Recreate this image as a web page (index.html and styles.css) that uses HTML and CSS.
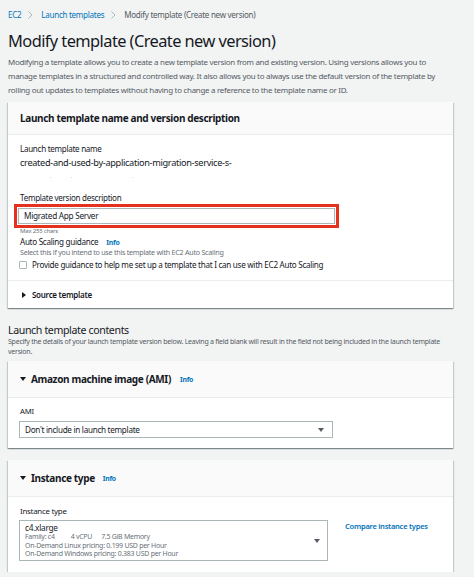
FILE: index.html
```html
<!DOCTYPE html>
<html lang="en">
<head>
<meta charset="utf-8">
<title>Modify template (Create new version)</title>
<link rel="stylesheet" href="styles.css">
</head>
<body>
<div class="page">
  <nav class="crumbs">
    <a class="crumb-link">EC2</a>
    <svg class="chev" width="5" height="8" viewBox="0 0 5 8"><polyline points="0.5,0.5 4,4 0.5,7.5" fill="none" stroke="#aab7b8" stroke-width="1"/></svg>
    <a class="crumb-link">Launch templates</a>
    <svg class="chev" width="5" height="8" viewBox="0 0 5 8"><polyline points="0.5,0.5 4,4 0.5,7.5" fill="none" stroke="#aab7b8" stroke-width="1"/></svg>
    <span class="crumb-current">Modify template (Create new version)</span>
  </nav>

  <h1 class="title">Modify template (Create new version)</h1>
  <p class="intro">Modifying a template allows you to create a new template version from and existing version. Using versions allows you to<br>manage templates in a structured and controlled way. It also allows you to always use the default version of the template by<br>rolling out updates to templates without having to change a reference to the template name or ID.</p>

  <section class="card">
    <div class="card-head card-head-sm">
      <h2 class="card-title">Launch template name and version description</h2>
    </div>
    <div class="card-body body-1">
      <div class="label">Launch template name</div>
      <div class="value">created-and-used-by-application-migration-service-s-</div>
      <div class="blurred"><span class="dot d1"></span><span class="dot d2"></span><span class="dot d3"></span></div>
      <div class="label label-tight">Template version description</div>
      <div class="highlight">
        <div class="input">Migrated App Server</div>
      </div>
      <div class="hint hint-max">Max 255 chars</div>
      <div class="label-row">
        <span class="label">Auto Scaling guidance</span>
        <a class="info">Info</a>
      </div>
      <div class="hint hint-desc">Select this if you intend to use this template with EC2 Auto Scaling</div>
      <label class="check-row">
        <span class="checkbox"></span>
        <span class="check-text">Provide guidance to help me set up a template that I can use with EC2 Auto Scaling</span>
      </label>
    </div>
    <div class="card-foot">
      <svg class="tri-right" width="4" height="6" viewBox="0 0 4 6"><polygon points="0,0 4,3 0,6" fill="#16191f"/></svg>
      <span class="foot-text">Source template</span>
    </div>
  </section>

  <h2 class="section-title">Launch template contents</h2>
  <p class="section-desc">Specify the details of your launch template version below. Leaving a field blank will result in the field not being included in the launch template<br>version.</p>

  <section class="card card-2">
    <div class="card-head">
      <svg class="tri-down" width="6" height="4" viewBox="0 0 6 4"><polygon points="0,0 6,0 3,4" fill="#16191f"/></svg>
      <h2 class="card-title">Amazon machine image (AMI)</h2>
      <a class="info info-head">Info</a>
    </div>
    <div class="card-body body-2">
      <div class="label">AMI</div>
      <div class="select select-ami">
        <span class="select-text">Don't include in launch template</span>
        <svg width="6" height="4" viewBox="0 0 6 4"><polygon points="0,0 6,0 3,4" fill="#545b64"/></svg>
      </div>
    </div>
  </section>

  <section class="card card-3">
    <div class="card-head">
      <svg class="tri-down" width="6" height="4" viewBox="0 0 6 4"><polygon points="0,0 6,0 3,4" fill="#16191f"/></svg>
      <h2 class="card-title">Instance type</h2>
      <a class="info info-head info-inst">Info</a>
    </div>
    <div class="card-body body-3">
      <div class="label">Instance type</div>
      <div class="instance-row">
        <div class="select select-instance">
          <div class="instance-info">
            <div class="instance-name">c4.xlarge</div>
            <div class="instance-meta"><span class="spec spec-family">Family: c4</span><span class="spec spec-cpu">4 vCPU</span><span>7.5 GiB Memory</span></div>
            <div class="instance-meta">On-Demand Linux pricing: 0.199 USD per Hour</div>
            <div class="instance-meta">On-Demand Windows pricing: 0.383 USD per Hour</div>
          </div>
          <svg width="6" height="4" viewBox="0 0 6 4"><polygon points="0,0 6,0 3,4" fill="#545b64"/></svg>
        </div>
        <a class="compare">Compare instance types</a>
      </div>
    </div>
  </section>
</div>
</body>
</html>
```

FILE: styles.css
```css
* {
  box-sizing: border-box;
  letter-spacing: -0.035em;
}

html, body {
  margin: 0;
  background: #f2f3f3;
}

body {
  font-family: "Noto Sans", "Open Sans", sans-serif;
  color: #16191f;
}

.page {
  width: 453px;
  padding: 8px 0 0 8px;
}

/* breadcrumbs */
.crumbs {
  display: flex;
  align-items: center;
  height: 14px;
  font-size: 8.05px;
  line-height: 14px;
  white-space: nowrap;
}
.crumb-link { color: #0073bb; }
.chev { margin: 0 8px 0 7px; }
.crumb-current { color: #545b64; }

.title {
  margin: 7px 0 0;
  font-size: 16.4px;
  line-height: 24px;
  font-weight: 400;
  white-space: nowrap;
}

.intro {
  margin: 2px 0 0;
  font-size: 7.95px;
  line-height: 14px;
  color: #545b64;
  white-space: nowrap;
}

/* cards */
.card {
  margin-top: 5px;
  background: #fff;
  box-shadow: 0 1px 1px 0 rgba(0, 28, 36, 0.3), 1px 1px 1px 0 rgba(0, 28, 36, 0.15), -1px 1px 1px 0 rgba(0, 28, 36, 0.15);
}
.card-3 { margin-top: 12px; }

.card-head {
  display: flex;
  align-items: center;
  height: 37px;
  padding: 0 12px;
  background: #fafafa;
  border-bottom: 1px solid #eaeded;
}
.card-head-sm { height: 33px; }

.card-title {
  margin: 0;
  font-size: 10px;
  font-weight: 700;
  line-height: 14px;
  white-space: nowrap;
}

.tri-down { margin-right: 5px; }

.card-body { padding: 0 12px; }
.body-1 { padding-top: 7px; padding-bottom: 9px; }
.body-2 { padding-top: 7px; padding-bottom: 10px; }
.body-3 { padding-top: 8px; padding-bottom: 11px; }

.label {
  font-size: 8.05px;
  line-height: 14px;
}
.value {
  font-size: 9.2px;
  line-height: 14px;
}
.blurred {
  display: flex;
  align-items: center;
  height: 15px;
}
.dot {
  width: 1px;
  height: 1px;
  background: #d9dcdd;
}
.d1 { margin-left: 30px; }
.d2 { margin-left: 20px; }
.d3 { margin-left: 60px; }

.label-tight { margin-top: 7px; line-height: 12px; }

.body-2 .label { font-size: 7.75px; line-height: 12px; }
.body-3 .label { font-size: 7.95px; line-height: 12px; }

.highlight {
  width: 325px;
  margin-left: -6px;
  border: 3px solid #e5321e;
  padding: 1px;
  background: #fff;
}
.input {
  height: 16px;
  border: 1px solid #aab7b8;
  padding-left: 5px;
  font-size: 8.25px;
  line-height: 14px;
}

.hint { color: #687078; }
.hint-max { font-size: 6px; line-height: 7px; }
.hint-desc { font-size: 7.15px; line-height: 8px; }

.label-row {
  display: flex;
  align-items: center;
  margin-top: 1px;
  height: 12px;
}
.label-row .label { font-size: 8.1px; line-height: 12px; }

.info {
  margin-left: 8px;
  color: #0073bb;
  font-size: 6.9px;
  font-weight: 700;
}
.info-head { margin-left: 9px; }
.info-inst { margin-left: 8px; }

.check-row {
  display: flex;
  align-items: center;
  height: 12px;
  margin-top: 3px;
  margin-left: -1px;
}
.checkbox {
  width: 8px;
  height: 8px;
  border: 1px solid #aab7b8;
  border-radius: 1px;
  background: #fff;
  margin-right: 5px;
}
.check-text {
  font-size: 8.1px;
  line-height: 12px;
  white-space: nowrap;
}

.card-foot {
  display: flex;
  align-items: center;
  height: 28px;
  padding-left: 14px;
  border-top: 1px solid #eaeded;
}
.tri-right { margin-right: 6px; }
.foot-text {
  font-size: 8px;
  font-weight: 600;
  color: #16191f;
}

/* section */
.section-title {
  margin: 15px 0 0;
  font-size: 10.6px;
  line-height: 14px;
  font-weight: 400;
}
.section-desc {
  margin: -1px 0 0;
  font-size: 7.03px;
  line-height: 10px;
  color: #545b64;
  white-space: nowrap;
}

/* selects */
.select {
  display: flex;
  align-items: center;
  justify-content: space-between;
  background: #fff;
  border: 1px solid #aab7b8;
}
.select-ami {
  width: 314px;
  height: 17px;
  margin-top: 4px;
  margin-left: -1px;
  padding: 0 8px 0 5px;
}
.select-text {
  font-size: 8.15px;
  line-height: 15px;
}

.instance-row {
  display: flex;
  align-items: flex-start;
  margin-top: 3px;
  margin-left: -1px;
}
.select-instance {
  width: 309px;
  height: 41px;
  padding: 1px 7px 1px 5px;
}
.instance-name {
  font-size: 8.3px;
  line-height: 11px;
}
.instance-meta {
  display: flex;
  font-size: 6.95px;
  line-height: 8.5px;
  color: #687078;
  white-space: nowrap;
}
.spec-family { margin-right: 16px; }
.spec-cpu { margin-right: 9px; }

.compare {
  margin-left: 17px;
  color: #0073bb;
  font-size: 7.55px;
  font-weight: 600;
  line-height: 12px;
  white-space: nowrap;
}
```
